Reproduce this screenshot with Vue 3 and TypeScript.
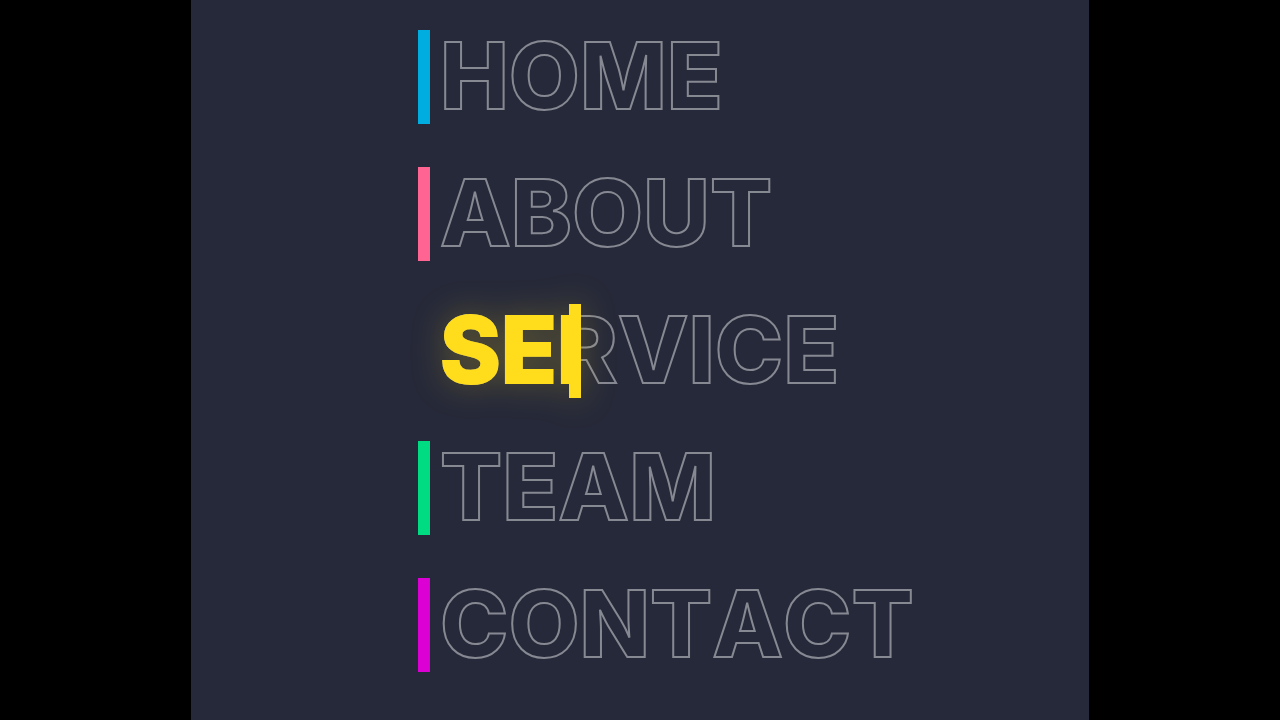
<script setup lang="ts">
interface MenuItem {
  label: string
  color: string
  active?: boolean
}

const items: MenuItem[] = [
  { label: 'HOME', color: '#00ade1' },
  { label: 'ABOUT', color: '#ff6493' },
  { label: 'SERVICE', color: '#ffdd1c', active: true },
  { label: 'TEAM', color: '#00dc82' },
  { label: 'CONTACT', color: '#dc00d4' },
]
</script>

<template>
  <div class="page">
    <nav class="panel" aria-label="Main">
      <ul class="menu">
        <li v-for="item in items" :key="item.label">
          <a
            href="#"
            class="link"
            :class="{ active: item.active }"
            :data-text="item.label"
            :style="{ '--accent': item.color }"
          >{{ item.label }}</a>
        </li>
      </ul>
    </nav>
  </div>
</template>

<style>
body {
  margin: 0;
  background: #000;
}
</style>

<style scoped>
.page {
  display: flex;
  justify-content: center;
  min-height: 100vh;
  background: #000;
}

.panel {
  box-sizing: border-box;
  flex: 0 1 898px;
  padding: 30px 0 30px 227px;
  background: #262939;
}

.menu {
  display: flex;
  flex-direction: column;
  gap: 43px;
  margin: 0;
  padding: 0;
  list-style: none;
}

.menu li {
  display: flex;
}

.link {
  position: relative;
  padding: 0 0 2px 22px;
  font-family: Inter, "Liberation Sans", sans-serif;
  font-size: 92px;
  font-weight: 800;
  font-kerning: none;
  line-height: 92px;
  white-space: nowrap;
  text-decoration: none;
  color: transparent;
  -webkit-text-stroke: 2px #868892;
}

.link::before {
  content: attr(data-text);
  position: absolute;
  top: 0;
  left: 0;
  width: 0;
  height: 100%;
  overflow: hidden;
  border-right: 12px solid var(--accent);
  text-indent: 22px;
  color: var(--accent);
  -webkit-text-stroke: 2px var(--accent);
}

.link.active::before {
  width: 151px;
  filter: drop-shadow(0 0 16px color-mix(in srgb, var(--accent) 25%, transparent));
}
</style>
